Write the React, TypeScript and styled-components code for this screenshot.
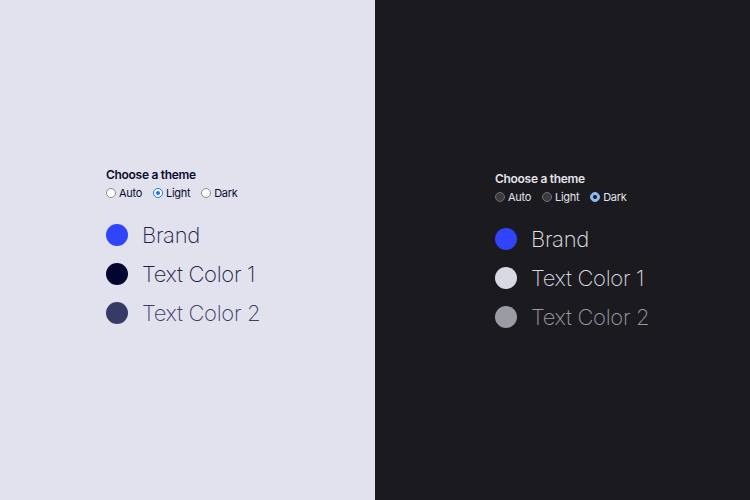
import React from "react";
import styled, { createGlobalStyle } from "styled-components";

const Global = createGlobalStyle`
  html, body { margin: 0; padding: 0; }
  body { font-family: Inter, "Noto Sans", sans-serif; -webkit-font-smoothing: antialiased; }
`;

type Mode = "light" | "dark";

const palette = {
  light: {
    bg: "#e1e2ee",
    heading: "#0b0c2c",
    label: "#0b0c2c",
    radioBg: "#ffffff",
    radioBorder: "#8a8a90",
    checkedBorder: "#1a73e8",
    checkedBg: "#ffffff",
    checkedDot: "#1a73e8",
    swatches: ["#2f44fb", "#020530", "#363a66"],
    texts: ["#1c1e44", "#1c1e44", "#3a3d66"],
  },
  dark: {
    bg: "#1b1b1f",
    heading: "#e2e2ea",
    label: "#e2e2ea",
    radioBg: "#3b3b3f",
    radioBorder: "#6e6e74",
    checkedBorder: "#8fb6f5",
    checkedBg: "#8fb6f5",
    checkedDot: "#1b1b1f",
    swatches: ["#2f44fb", "#d9d9e3", "#9b9ba3"],
    texts: ["#e2e2ea", "#d9d9e3", "#9b9ba3"],
  },
};

const Page = styled.div`
  display: flex;
  width: 750px;
  height: 500px;
`;

const Panel = styled.section<{ $mode: Mode; $left: number; $top: number }>`
  flex: 0 0 375px;
  width: 375px;
  background: ${(p) => palette[p.$mode].bg};
  padding: ${(p) => p.$top}px 0 0 ${(p) => p.$left}px;
  box-sizing: border-box;
`;

const Heading = styled.h2<{ $mode: Mode }>`
  margin: 0;
  font-size: 12px;
  font-weight: 600;
  line-height: 15px;
  letter-spacing: -0.3px;
  color: ${(p) => palette[p.$mode].heading};
`;

const RadioGroup = styled.div`
  display: flex;
  gap: 11px;
  margin-top: 4px;
`;

const RadioLabel = styled.label<{ $mode: Mode }>`
  display: flex;
  align-items: center;
  gap: 3px;
  font-size: 11px;
  line-height: 14px;
  letter-spacing: -0.3px;
  color: ${(p) => palette[p.$mode].label};
`;

const RadioDot = styled.span<{ $mode: Mode; $checked: boolean }>`
  width: 10px;
  height: 10px;
  border-radius: 50%;
  box-sizing: border-box;
  border: 1px solid
    ${(p) => (p.$checked ? palette[p.$mode].checkedBorder : palette[p.$mode].radioBorder)};
  background: ${(p) => (p.$checked ? palette[p.$mode].checkedBg : palette[p.$mode].radioBg)};
  display: flex;
  align-items: center;
  justify-content: center;
  &::after {
    content: "";
    display: ${(p) => (p.$checked ? "block" : "none")};
    width: 4px;
    height: 4px;
    border-radius: 50%;
    background: ${(p) => palette[p.$mode].checkedDot};
  }
`;

const SwatchList = styled.ul`
  list-style: none;
  margin: 20px 0 0;
  padding: 0;
  display: flex;
  flex-direction: column;
  gap: 9px;
`;

const SwatchRow = styled.li`
  display: flex;
  align-items: center;
  gap: 14px;
  height: 30px;
`;

const Swatch = styled.span<{ $color: string }>`
  width: 22px;
  height: 22px;
  border-radius: 50%;
  background: ${(p) => p.$color};
  flex: none;
`;

const SwatchName = styled.span<{ $color: string }>`
  font-size: 22px;
  font-weight: 200;
  letter-spacing: -0.3px;
  color: ${(p) => p.$color};
`;

const names = ["Brand", "Text Color 1", "Text Color 2"];
const options = ["Auto", "Light", "Dark"];

function ThemePanel({ mode, left, top }: { mode: Mode; left: number; top: number }) {
  const checked = mode === "light" ? "Light" : "Dark";
  return (
    <Panel $mode={mode} $left={left} $top={top}>
      <Heading $mode={mode}>Choose a theme</Heading>
      <RadioGroup>
        {options.map((o) => (
          <RadioLabel key={o} $mode={mode}>
            <RadioDot $mode={mode} $checked={o === checked} />
            {o}
          </RadioLabel>
        ))}
      </RadioGroup>
      <SwatchList>
        {names.map((n, i) => (
          <SwatchRow key={n}>
            <Swatch $color={palette[mode].swatches[i]} />
            <SwatchName $color={palette[mode].texts[i]}>{n}</SwatchName>
          </SwatchRow>
        ))}
      </SwatchList>
    </Panel>
  );
}

export default function App() {
  return (
    <>
      <Global />
      <Page>
        <ThemePanel mode="light" left={106} top={167} />
        <ThemePanel mode="dark" left={120} top={171} />
      </Page>
    </>
  );
}
